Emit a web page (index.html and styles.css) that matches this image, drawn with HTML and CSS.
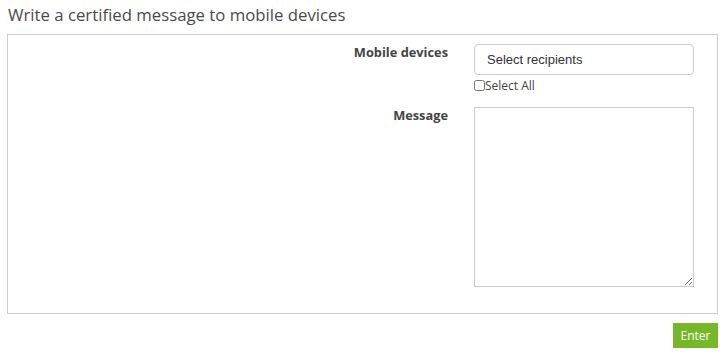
FILE: index.html
```html
<!DOCTYPE html>
<html>
<head>
<meta charset="utf-8">
<link rel="stylesheet" href="styles.css">
</head>
<body>
<div class="page">
  <h1 class="title">Write a certified message to mobile devices</h1>
  <div class="panel">
    <div class="form">
      <label class="label">Mobile devices</label>
      <div class="field">
        <div class="select">Select recipients</div>
        <label class="check"><input type="checkbox" class="cb">Select All</label>
      </div>
      <label class="label">Message</label>
      <div class="field">
        <textarea class="textarea"></textarea>
      </div>
    </div>
  </div>
  <div class="actions">
    <button class="btn">Enter</button>
  </div>
</div>
</body>
</html>
```
FILE: styles.css
```css
* { box-sizing: border-box; }
html, body { margin: 0; padding: 0; background: #fff; }
body { font-family: "Open Sans", "Liberation Sans", sans-serif; color: #444; }
.page { padding: 0 8px 0 7px; }
.title {
  margin: 0;
  padding: 4px 0 0 1px;
  height: 34px;
  font-size: 16.75px;
  font-weight: 400;
  color: #4a4a4a;
  line-height: 22px;
}
.panel {
  border: 1px solid #ccc;
  padding: 9px 23px 26px 0;
}
.form {
  display: grid;
  grid-template-columns: 440px 220px;
  column-gap: 26px;
  justify-content: end;
}
.label {
  text-align: right;
  font-weight: 700;
  font-size: 12.8px;
  color: #444;
  line-height: 16px;
}
.field { display: flex; flex-direction: column; }
.select {
  height: 31px;
  border: 1px solid #ccc;
  border-radius: 4px;
  padding: 0 12px;
  font-family: "Liberation Sans", Arial, sans-serif;
  font-size: 13px;
  color: #333;
  line-height: 29px;
}
.check {
  display: flex;
  align-items: center;
  height: 18px;
  margin-top: 1px;
  margin-bottom: 13px;
  font-size: 12px;
  color: #444;
}
.cb {
  margin: 0;
  width: 11px;
  height: 11px;
}
.textarea {
  display: block;
  width: 220px;
  height: 180px;
  border: 1px solid #ccc;
  margin: 0;
  padding: 4px;
  resize: both;
  font-family: inherit;
}
.actions {
  display: flex;
  justify-content: flex-end;
  padding-top: 9px;
}
.btn {
  height: 25px;
  width: 45px;
  border: 0;
  margin: 0;
  padding: 0;
  background: #77b82a;
  color: #fff;
  font-family: "Open Sans", sans-serif;
  font-size: 12px;
}
```
